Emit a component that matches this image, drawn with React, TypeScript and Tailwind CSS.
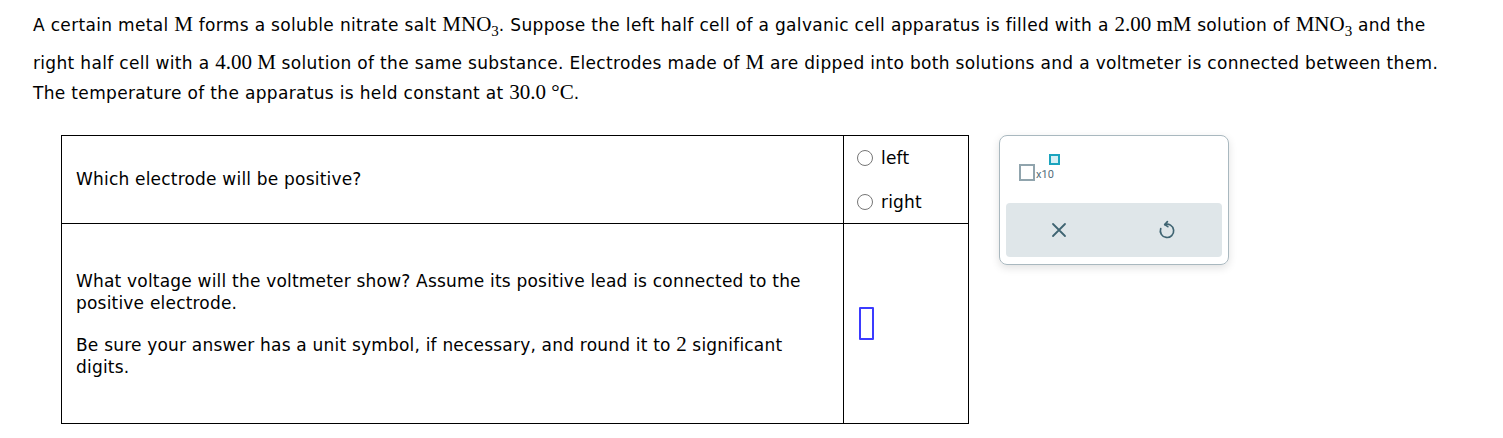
import React from 'react';

const M = ({ children }: { children: React.ReactNode }) => (
  <span className="text-[21px] leading-none tracking-normal" style={{ fontFamily: '"Liberation Serif", serif' }}>{children}</span>
);

const MNO3 = () => (
  <M>
    MNO<sub className="text-[15px] relative top-[5px]">3</sub>
  </M>
);

function Radio({ label }: { label: string }) {
  return (
    <label className="flex items-center gap-[8px] leading-[24px]">
      <span className="w-[16px] h-[16px] rounded-full border border-[#767676] bg-white" />
      <span>{label}</span>
    </label>
  );
}

export default function App() {
  return (
    <div className="w-[1503px] h-[438px] bg-white text-[17px] tracking-[0.2px] text-black" style={{ fontFamily: '"DejaVu Sans", Verdana, sans-serif' }}>
      {/* Problem statement */}
      <div className="pl-[33px] pt-[10px] whitespace-nowrap leading-[30px] tracking-[0.33px]">
        <div className="h-[30px]">
          A certain metal <M>M</M> forms a soluble nitrate salt <MNO3 />. Suppose the left half cell of a galvanic cell apparatus is filled with a <M>2.00 mM</M> solution of <MNO3 /> and the
        </div>
        <div className="h-[30px] mt-[8px]">
          right half cell with a <M>4.00 M</M> solution of the same substance. Electrodes made of <M>M</M> are dipped into both solutions and a voltmeter is connected between them.
        </div>
        <div className="h-[30px]">
          The temperature of the apparatus is held constant at <M>30.0 °C</M>.
        </div>
      </div>

      <div className="flex items-start pl-[61px] pt-[27px] gap-[30px]">
        <table className="border-collapse">
          <tbody>
            <tr>
              <td className="border border-black w-[782px] h-[87px] px-[14px] align-middle">Which electrode will be positive?</td>
              <td className="border border-black w-[125px] px-[13px] align-top">
                <div className="flex flex-col gap-[20px] pt-[10px] pb-[9px]">
                  <Radio label="left" />
                  <Radio label="right" />
                </div>
              </td>
            </tr>
            <tr>
              <td className="border border-black h-[200px] px-[14px] align-middle leading-[22px]">
                <p>What voltage will the voltmeter show? Assume its positive lead is connected to the<br />positive electrode.</p>
                <p className="mt-[20px]">Be sure your answer has a unit symbol, if necessary, and round it to <M>2</M> significant<br />digits.</p>
              </td>
              <td className="border border-black align-middle px-[15px]">
                <div className="w-[15px] h-[33px] border-2 border-[#3b3bff] rounded-[1px]" />
              </td>
            </tr>
          </tbody>
        </table>

        {/* Answer tools */}
        <div className="w-[230px] h-[130px] border border-[#a9b8bf] rounded-[8px] shadow-[0_3px_8px_rgba(0,0,0,0.12)] px-[6px] pt-[20px]">
          <div className="flex items-end h-[25px] pl-[13px]">
            <span className="w-[16px] h-[17px] border-2 border-[#90a4ad]" />
            <span className="relative text-[11px] text-[#546e7a] leading-none mb-[1px] ml-[1px] tracking-normal" style={{ fontFamily: 'Roboto, sans-serif' }}>
              x10
              <span className="absolute left-[13px] -top-[15px] w-[11px] h-[11px] border-2 border-[#1ba4be] bg-[#d6f0f5]" />
            </span>
          </div>
          <div className="mt-[22px] h-[54px] rounded-[4px] bg-[#dfe6e9] flex items-center justify-around">
            <svg width="16" height="16" viewBox="0 0 16 16" fill="none" stroke="#3f6472" strokeWidth="1.8" strokeLinecap="round">
              <path d="M2 2 L14 14 M14 2 L2 14" />
            </svg>
            <svg width="20" height="20" viewBox="0 0 24 24" fill="none" stroke="#3f6472" strokeWidth="2" strokeLinecap="round" strokeLinejoin="round">
              <path d="M9.26 5.48 A8 8 0 1 1 4.48 10.26" />
              <path d="M12.5 2 L9.26 5.48 L13 8" />
            </svg>
          </div>
        </div>
      </div>
    </div>
  );
}
